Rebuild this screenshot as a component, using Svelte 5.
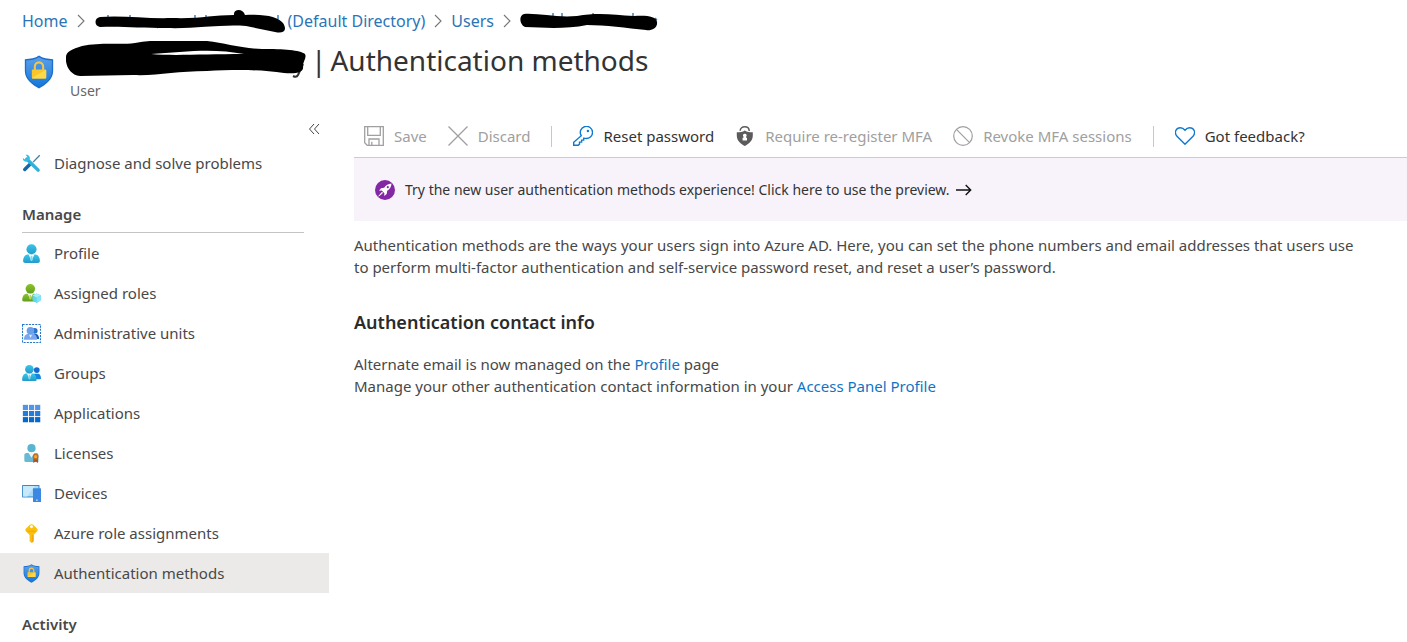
<script>
  const manageItems = [
    { icon: 'profile', label: 'Profile' },
    { icon: 'roles', label: 'Assigned roles' },
    { icon: 'units', label: 'Administrative units' },
    { icon: 'groups', label: 'Groups' },
    { icon: 'apps', label: 'Applications' },
    { icon: 'licenses', label: 'Licenses' },
    { icon: 'devices', label: 'Devices' },
    { icon: 'key', label: 'Azure role assignments' },
    { icon: 'shield', label: 'Authentication methods' }
  ];

  const commands = [
    { icon: 'save', label: 'Save', disabled: true },
    { icon: 'discard', label: 'Discard', disabled: true },
    { separator: true },
    { icon: 'reset', label: 'Reset password' },
    { icon: 'mfa', label: 'Require re-register MFA', disabled: true },
    { icon: 'revoke', label: 'Revoke MFA sessions', disabled: true },
    { separator: true },
    { icon: 'heart', label: 'Got feedback?' }
  ];

  let selected = $state('Authentication methods');
</script>

{#snippet chevron()}
  <svg class="chevron" viewBox="0 0 8 14" aria-hidden="true">
    <path d="M1 1l6 6-6 6" fill="none" stroke="#767676" stroke-width="1.1" />
  </svg>
{/snippet}

{#snippet shield()}
  <path d="M9 .3c2 1.500 4.500 1.700 7.500 1.900v6.300c0 4.500-4 7.300-7.500 9.300-3.500-2-7.500-4.800-7.500-9.300V2.200C4.500 2 7 1.800 9 .3z" fill="#1b6fc9" />
  <path d="M9 1.200c2 1.300 4.300 1.600 6.800 1.700v5.600c0 4-3.600 6.600-6.800 8.400-3.200-1.800-6.800-4.400-6.800-8.400V2.900C4.700 2.800 7 2.500 9 1.200z" fill="url(#blue)" />
  <path d="M6.800 8.300V6.100a2.200 2.200 0 0 1 4.400 0v2.200" fill="none" stroke="#f5c645" stroke-width="1.100" />
  <rect x="5.200" y="7.700" width="7.600" height="4.700" rx=".5" fill="#fbc62a" />
  <path d="M5.200 12.200l7.400-4.400c.1.100.2.200.2.400v3.700a.5.500 0 0 1-.5.500H5.600z" fill="#ffd94a" />
{/snippet}

{#snippet icon(name)}
  <svg class="icon" viewBox="0 0 18 18" aria-hidden="true">
    {#if name === 'tools'}
      <path d="M16.800 1.200L10.500 7.700" stroke="#4a7fa5" stroke-width="1.300" />
      <path d="M8.300 9L2.600 14.700" stroke="#1568a8" stroke-width="3.200" stroke-linecap="round" />
      <path d="M4.500 4.800L15.300 15.300" stroke="#2fb0dc" stroke-width="3.200" stroke-linecap="round" />
      <path d="M3.300.7C5.700.1 8 2.100 7.400 4.700L5 7.300C2.700 8 .6 6.300.8 3.800l2.100 1.300 1.700-.5.400-1.900z" fill="#38bde5" />
    {:else if name === 'profile'}
      <path d="M2.800 18A1.900 1.900 0 0 1 1 15.900c.4-3.500 1.600-6 4.800-6h6.400c3.200 0 4.400 2.500 4.800 6a1.900 1.900 0 0 1-1.800 2.100z" fill="url(#cyan)" />
      <path d="M6.200 9.900L9 15.800l2.800-5.900z" fill="#fff" />
      <path d="M8.200 11.200h1.600l.5 4-1.300 1.200-1.300-1.200z" fill="#7fdcf0" />
      <circle cx="9" cy="5" r="4.800" fill="url(#cyan)" />
    {:else if name === 'roles'}
      <path d="M1.600 16.500A1.500 1.500 0 0 1 .2 14.800c.4-3.500 1.500-5.600 4.500-5.600h6.200c3 0 4.100 2.100 4.500 5.600a1.500 1.500 0 0 1-1.400 1.700z" fill="url(#green)" />
      <path d="M5.400 9.200l2.500 5.300 2.500-5.300z" fill="#fff" />
      <path d="M7.200 10.500h1.400l.4 3.500-1.100 1-1.100-1z" fill="#b4d84b" />
      <circle cx="7.900" cy="4.600" r="4.500" fill="url(#green)" />
      <path d="M13.900 8.900l4 1.800v4.800l-4 2.400-4-2.400v-4.800z" fill="#5cd5ed" />
      <path d="M9.900 10.700l4 2 4-2-4-1.800z" fill="#a8edf7" />
      <path d="M13.900 12.700v5.200l4-2.400v-4.800z" fill="#83e2f3" />
    {:else if name === 'units'}
      <rect x=".5" y=".5" width="17" height="17" fill="#fff" stroke="#2677cb" stroke-dasharray="2 1" />
      <circle cx="12" cy="6.500" r="2.800" fill="#2871ca" />
      <path d="M10 9.500h3.500c1.800.4 2.700 2.300 2.700 4.700H10z" fill="#155ab2" />
      <path d="M1.800 15c0-3.300 1.400-5.500 3.900-5.500h4.700c2.500 0 3.900 2.200 3.900 5.500z" fill="#79a8ef" />
      <path d="M6.700 10l1.400 3.200L9.500 10z" fill="#e8f0fd" />
      <circle cx="8" cy="6.500" r="3.600" fill="#6c9fea" />
    {:else if name === 'groups'}
      <circle cx="14" cy="5.800" r="2.700" fill="#136ccb" />
      <path d="M11 9.200h4.600c1.500.3 2.200 2 2.400 4.200a.9.900 0 0 1-.9 1H12z" fill="#1685df" />
      <path d="M1.300 16.200A1.300 1.300 0 0 1 .1 14.700C.4 11.300 1.400 9 4.300 9h5.300c2.900 0 3.900 2.300 4.200 5.700a1.300 1.300 0 0 1-1.200 1.500z" fill="url(#cyan)" />
      <path d="M4.700 9L7 14.100 9.300 9z" fill="#fff" />
      <path d="M6.400 10.300h1.200l.5 3.500L7 14.700l-1.100-.9z" fill="#7fdcf0" />
      <circle cx="7" cy="5" r="4.100" fill="url(#cyan)" />
    {:else if name === 'apps'}
      {#each [0.8, 6.6, 12.4] as y, row}
        {#each [0.8, 6.6, 12.4] as x}
          <rect {x} {y} width="4.900" height="4.900" fill={['#5095e8', '#267bd9', '#0868ca'][row]} />
        {/each}
      {/each}
    {:else if name === 'licenses'}
      <path d="M3.500 17A1.300 1.300 0 0 1 2.200 15.500V10.700c0-1.400.9-2.200 2-2.200h9.400c1.100 0 2 .8 2 2.200V17z" fill="#67b9d4" />
      <path d="M6.200 8.500L9 13l2.800-4.500z" fill="#e9f7fb" />
      <circle cx="9" cy="4" r="3.900" fill="#58b5d0" />
      <path d="M10.700 13h4.400v5l-2.200-1.500-2.200 1.500z" fill="#a85227" />
      <circle cx="12.900" cy="12" r="2.700" fill="#c66a22" />
      <circle cx="12.900" cy="12" r="1.500" fill="#f6a62c" />
    {:else if name === 'devices'}
      <rect x=".2" y="1" width="16.300" height="11.700" fill="#1f79c9" />
      <rect x="1" y="1.800" width="14.700" height="10.100" fill="#a9dcf7" />
      <path d="M1 1.800h11L5 11.900H1z" fill="#c7eafb" />
      <rect x="10.400" y="4" width="7.600" height="13" rx=".5" fill="#3a88e2" />
      <rect x="13.300" y="14.700" width="1.600" height="1.300" fill="#b8daf9" />
    {:else if name === 'key'}
      <path d="M9 .2c.8 0 1.300.2 1.800.7l3.400 3.400c.9.900.9 2 0 2.900L11 10.400v6L9.200 18l-2-1.600v-6L3.800 7.200c-.9-.9-.9-2 0-2.900L7.200.9C7.700.4 8.200.2 9 .2z" fill="#fbc00d" />
      <path d="M9.300 10.500H11v5.900L9.300 18z" fill="#f3a60d" />
      <path d="M5.200 6.200h7.600v1.300H5.200z" fill="#f3ab0b" />
      <circle cx="9" cy="2.700" r="1.400" fill="#fff" />
    {:else}
      {@render shield()}
    {/if}
  </svg>
{/snippet}

{#snippet commandIcon(name)}
  <svg class="command-icon" viewBox="0 0 20 20" aria-hidden="true">
    {#if name === 'save'}
      <g fill="none" stroke="currentColor" stroke-width="1.300">
        <path d="M.7.700h18.600v18.600H3.200L.7 16.800z" />
        <path d="M3.700.700v8.600h12.600V.700M5 19.300v-6.300h10v6.300M7.800 19v-3.300" />
      </g>
    {:else if name === 'discard'}
      <path d="M.5.500l19 19M19.500.500l-19 19" stroke="currentColor" stroke-width="1.300" />
    {:else if name === 'reset'}
      <path d="M8.100 9.400A6.100 6.100 0 1 1 12.200 12.400L10.700 12.300v1.800H8.600v2H6.500v2L5.300 19.300H.7v-3L8.300 9.700z" fill="none" stroke="#0f79d0" stroke-width="1.400" />
      <circle cx="14.900" cy="5" r="1.200" fill="#0f79d0" />
    {:else if name === 'mfa'}
      <path d="M5.200 4.700c0-5.300 9-5.300 9 .2" fill="none" stroke="#5b5b5b" stroke-width="1.500" />
      <path d="M9.800 4.500c2.300 1.500 4.800 1.700 8 1.700v3.600c0 5.100-4.300 8.300-8 10.200-3.800-1.900-8-5.100-8-10.200V6.200c3.200 0 5.700-.2 8-1.700z" fill="#5b5b5b" />
      <path d="M9.800 7.700a1.800 1.800 0 0 1 1.300 3.100v1h.9v2.700H7.600v-2.700h.9v-1A1.800 1.800 0 0 1 9.800 7.700z" fill="#fff" />
    {:else if name === 'revoke'}
      <circle cx="10" cy="10" r="9.300" fill="none" stroke="currentColor" stroke-width="1.200" />
      <path d="M3.400 3.400l13.200 13.200" stroke="currentColor" stroke-width="1.200" />
    {:else if name === 'heart'}
      <path d="M10 18.200L2 10.200C-1.500 6.200 1.300 1.700 5.400 1.700 7.500 1.700 9 3 10 4.200c1-1.200 2.500-2.500 4.600-2.500 4.100 0 6.900 4.500 3.400 8.500z" fill="none" stroke="#0f79d0" stroke-width="1.400" />
    {/if}
  </svg>
{/snippet}

<svg class="defs" width="0" height="0" aria-hidden="true">
  <defs>
    <linearGradient id="blue" x1="0" y1="0" x2="0" y2="1">
      <stop offset="0" stop-color="#5a9fe9" />
      <stop offset="1" stop-color="#1478da" />
    </linearGradient>
    <linearGradient id="cyan" x1="0" y1="0" x2="0" y2="1">
      <stop offset="0" stop-color="#35c8e8" />
      <stop offset="1" stop-color="#2499cb" />
    </linearGradient>
    <linearGradient id="green" x1="0" y1="0" x2="0" y2="1">
      <stop offset="0" stop-color="#8cc52b" />
      <stop offset="1" stop-color="#629d20" />
    </linearGradient>
  </defs>
</svg>

<div class="page">
  <header>
    <nav class="breadcrumb" aria-label="Breadcrumb">
      <a href="#home">Home</a>
      {@render chevron()}
      <a class="directory" href="#directory">
        <svg width="192" height="26" viewBox="92 8 192 26" aria-hidden="true">
          <path d="M106 15v4M128 15v4M155 28l2-3M193 15v4M204 15v4M250 15v4M276 15v4" stroke="#3b83c0" stroke-width="1.500" />
          <path d="M98 17C120 15 145 19 170 18C198 19 210 15 232 15C231 9 241 8 243 15C264 14 276 17 281 23C286 31 281 34 273 32L244 26C220 24 193 29 165 28C138 28 118 26 98 27C92 26 92 18 98 17z" />
        </svg>
        (Default Directory)
      </a>
      {@render chevron()}
      <a href="#users">Users</a>
      {@render chevron()}
      <svg width="138" height="22" viewBox="521 10 138 22" aria-hidden="true">
        <path d="M554 13v4M563 13v4M594 13v3M634 13v4M656 18l2 2" stroke="#3b83c0" stroke-width="1.500" />
        <path d="M525 14C540 13 558 18 578 16C600 12 615 15 635 16C646 15 658 16 658 22C659 28 652 31 647 30C628 28 606 25 588 25C568 29 548 28 526 27C520 24 520 15 525 14z" />
      </svg>
    </nav>
    <div class="title-row">
      <svg class="title-icon" viewBox="0 0 18 18" aria-hidden="true">{@render shield()}</svg>
      <div>
        <h1>
          <svg width="241" height="38" viewBox="66 41 241 38" aria-hidden="true">
            <path d="M303 64l-5 11c-1 2-3 2-5 1" fill="none" stroke="#333" stroke-width="2" />
            <path fill-rule="evenodd" d="M82 46C101 42 120 45 135 43C157 39 180 40 207 41C225 43 239 48 262 49C284 49 300 50 305 54C307 58 303 61 303 66C304 72 298 74 284 73C257 69 231 70 207 71C176 71 158 76 133 75L80 76C70 75 65 65 66 57C66 52 72 49 82 46zM151 54C173 56 205 54 244 54C229 51 211 50 194 51z" />
          </svg>
          <span>|</span>
          <span>Authentication methods</span>
        </h1>
        <p class="subtitle">User</p>
      </div>
    </div>
  </header>

  <div class="body">
    <aside>
      <button class="collapse" aria-label="Collapse menu">
        <svg width="12" height="12" viewBox="0 0 12 12" aria-hidden="true">
          <path d="M6 1L1.500 6 6 11M11 1L6.500 6 11 11" fill="none" stroke="#444" stroke-width="1" />
        </svg>
      </button>
      <a class="item" href="#diagnose">{@render icon('tools')}Diagnose and solve problems</a>
      <h2 class="ruled">Manage</h2>
      <nav aria-label="Manage">
        {#each manageItems as item}
          <a
            class="item"
            class:selected={selected === item.label}
            href="#{item.icon}"
            onclick={() => (selected = item.label)}
          >
            {@render icon(item.icon)}{item.label}
          </a>
        {/each}
      </nav>
      <h2>Activity</h2>
    </aside>

    <main>
      <div class="commands" role="toolbar">
        {#each commands as command}
          {#if command.separator}
            <span class="separator"></span>
          {:else}
            <button disabled={command.disabled}>
              {@render commandIcon(command.icon)}{command.label}
            </button>
          {/if}
        {/each}
      </div>

      <a class="banner" href="#preview">
        <svg width="20" height="20" viewBox="0 0 20 20" aria-hidden="true">
          <circle cx="10" cy="10" r="10" fill="#8327a4" />
          <path d="M16.500 3.500c-3.300.2-5.600 1.600-7.300 4.300L6 8.300l-2 2.500 2.700-.2 2.700 2.700-.2 2.700 2.500-2 .5-3.200c2.700-1.700 4.100-4 4.300-7.300z" fill="#fff" />
          <path d="M7 12.300l-3.300 3.900 3.900-3.300z" fill="#fff" stroke="#fff" stroke-width=".8" />
          <circle cx="12.800" cy="7.200" r="1.100" fill="#8327a4" />
        </svg>
        <span>Try the new user authentication methods experience! Click here to use the preview.</span>
        <svg class="arrow" width="16" height="12" viewBox="0 0 16 12" aria-hidden="true">
          <path d="M0 6h15M9.700 1l5 5-5 5" fill="none" stroke="#111" stroke-width="1.400" />
        </svg>
      </a>

      <section>
        <p>
          Authentication methods are the ways your users sign into Azure AD. Here, you can set the phone numbers and
          email addresses that users use to perform multi-factor authentication and self-service password reset, and
          reset a user’s password.
        </p>
        <h3>Authentication contact info</h3>
        <p>Alternate email is now managed on the <a href="#profile">Profile</a> page</p>
        <p>Manage your other authentication contact information in your <a href="#access">Access Panel Profile</a></p>
      </section>
    </main>
  </div>
</div>

<style>
  :global(body) {
    margin: 0;
    background: #fff;
  }

  .page {
    font-family: 'Noto Sans', 'Open Sans', sans-serif;
    font-size: 15px;
    line-height: 22px;
    color: #484848;
  }

  .defs {
    position: absolute;
  }

  h1,
  h2,
  h3,
  p {
    margin: 0;
  }

  a {
    color: #0f74c4;
    text-decoration: none;
  }

  svg {
    flex: none;
  }

  header {
    padding: 10px 22px 0;
  }

  .breadcrumb {
    display: flex;
    align-items: center;
    gap: 9px;
    height: 22px;
    font-size: 16px;
  }

  .breadcrumb a {
    color: #2a75b8;
    white-space: nowrap;
  }

  .directory {
    display: flex;
    align-items: center;
    gap: 2px;
  }

  .chevron {
    width: 8px;
    height: 14px;
  }

  .title-row {
    display: flex;
    gap: 10px;
    padding-top: 9px;
  }

  .title-icon {
    width: 34px;
    height: 34px;
    margin-top: 14px;
  }

  h1 {
    display: flex;
    align-items: center;
    gap: 4px;
    height: 38px;
    font-size: 28px;
    font-weight: 400;
    color: #333;
    white-space: nowrap;
  }

  .subtitle {
    padding: 1px 0 0 4px;
    font-size: 14px;
    color: #666;
  }

  .body {
    display: flex;
    align-items: flex-start;
    padding-top: 13px;
  }

  aside {
    flex: none;
    width: 329px;
  }

  .collapse {
    display: flex;
    align-items: center;
    height: 28px;
    margin-left: auto;
    margin-right: 9px;
    padding: 0;
    border: 0;
    background: none;
    cursor: pointer;
  }

  .item {
    display: flex;
    align-items: center;
    gap: 13px;
    height: 40px;
    padding-left: 22px;
    color: #484848;
  }

  .item.selected {
    background: #ebeae9;
  }

  .icon {
    width: 19px;
    height: 19px;
  }

  h2 {
    margin: 0 25px 0 22px;
    padding-top: 20px;
    font-size: 15px;
    font-weight: 600;
  }

  .ruled {
    padding-bottom: 7px;
    border-bottom: 1px solid #c4c4c4;
  }

  main {
    flex: 1;
    min-width: 0;
    margin-left: 25px;
  }

  .commands {
    display: flex;
    align-items: center;
    gap: 1px;
    height: 42px;
    border-bottom: 1px solid #ccc;
  }

  .commands button {
    display: flex;
    align-items: center;
    gap: 10px;
    padding: 0 10px;
    border: 0;
    background: none;
    font: inherit;
    color: #333;
    white-space: nowrap;
    cursor: pointer;
  }

  .commands button:disabled {
    color: #a0a0a0;
    cursor: default;
  }

  .command-icon {
    width: 20px;
    height: 20px;
  }

  .separator {
    width: 1px;
    height: 21px;
    margin: 0 10px;
    background: #c8c8c8;
  }

  .banner {
    display: flex;
    align-items: center;
    gap: 10px;
    min-height: 63px;
    padding: 0 21px;
    background: #f8f3fb;
    font-size: 14px;
    color: #333;
  }

  .arrow {
    margin-left: -4px;
  }

  section {
    padding: 13px 36px 0 0;
  }

  h3 {
    padding: 33px 0 20px;
    font-size: 18px;
    font-weight: 600;
    color: #2b2b2b;
  }
</style>
